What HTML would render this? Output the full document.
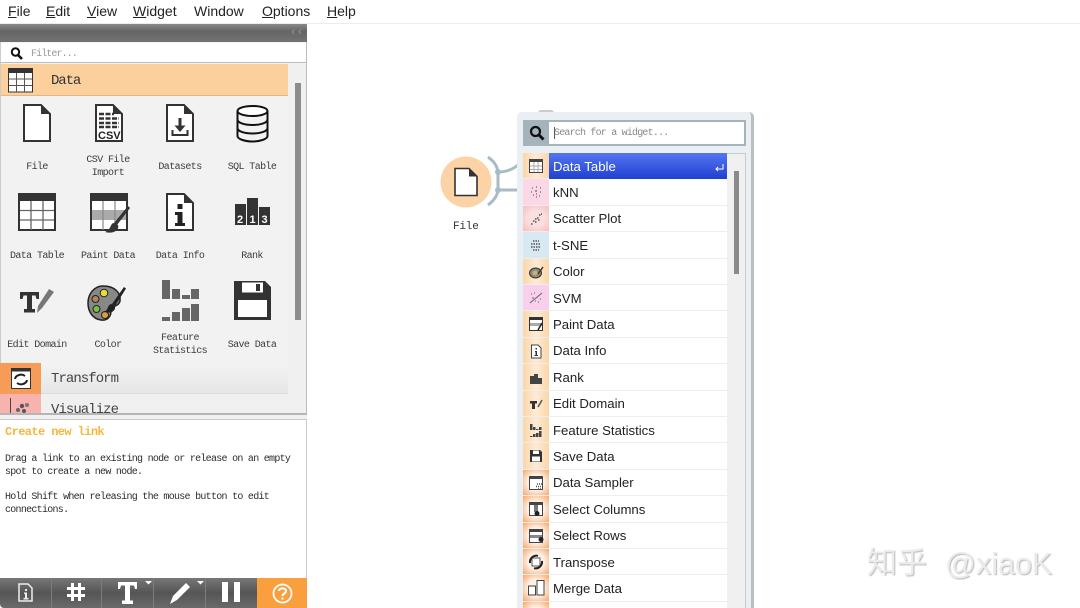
<!DOCTYPE html>
<html><head><meta charset="utf-8"><style>
html,body{margin:0;padding:0;width:1080px;height:608px;overflow:hidden;background:#fff}
#root{position:relative;width:1080px;height:608px;overflow:hidden;background:#fff}
#root div,#root span{position:absolute;box-sizing:border-box}
svg{position:absolute;overflow:visible}
#root .m{font:14px "Liberation Sans",sans-serif;color:#222;top:3px;white-space:nowrap}
.m u{text-decoration:underline}
#root .l{font:10px/13px "Liberation Mono",monospace;letter-spacing:-.6px;color:#3c3c3c;text-align:center;white-space:pre;width:72px}
#root .h{font:10px/13px "Liberation Mono",monospace;letter-spacing:-.72px;color:#2c2c2c;left:5px;white-space:pre}
#root .r{left:523px;width:204px;height:26.4px;background:#fff;border-bottom:1px solid #eee}
.r i{position:absolute;left:0;top:0;width:26px;height:100%;display:block}
.r b{position:absolute;left:30px;top:4.500px;font:normal 13.200px/18px "Liberation Sans",sans-serif;color:#222;white-space:nowrap}
.r svg{left:6px;top:6px}
.o i{background:linear-gradient(90deg,#fcd6a8,#fdebd6 50%,#fcd6a8)}
.d i{background:radial-gradient(#fdf0e4 45%,#f8a566)}
</style></head><body><div id="root">
<span class="m" style="left:8px"><u>F</u>ile</span>
<span class="m" style="left:46px"><u>E</u>dit</span>
<span class="m" style="left:87px"><u>V</u>iew</span>
<span class="m" style="left:133px"><u>W</u>idget</span>
<span class="m" style="left:194px">Window</span>
<span class="m" style="left:262px"><u>O</u>ptions</span>
<span class="m" style="left:327px"><u>H</u>elp</span>
<div style="left:0;top:23px;width:1080px;height:1px;background:#ececec"></div>

<!-- left dock -->
<div style="left:0;top:24px;width:307px;height:18px;background:linear-gradient(#8a8a8a,#656565 40%,#737373)"></div>
<span style="left:290px;top:26px;font:11px/14px 'Liberation Mono',monospace;color:#999">‹‹</span>
<div style="left:0;top:42px;width:307px;height:372px;background:#f2f2f2;border-right:1px solid #bbb;border-left:1px solid #ccc"></div>
<div style="left:1px;top:43px;width:305px;height:20px;background:#fff;border-bottom:1px solid #bbb"></div>
<svg style="left:10px;top:47px" width="14" height="13" viewBox="0 0 14 13"><circle cx="5.5" cy="5" r="3.7" fill="none" stroke="#111" stroke-width="2"/><path d="M8 8l4 4" stroke="#111" stroke-width="2.6"/></svg>
<span style="left:31px;top:48px;font:10px/13px 'Liberation Mono',monospace;letter-spacing:-.9px;color:#999">Filter...</span>
<div style="left:1px;top:64px;width:287px;height:32px;background:#fbd09d;border-bottom:1px solid #e2b785"></div>
<svg style="left:8px;top:68px" width="26" height="25" viewBox="0 0 26 25"><rect x=".5" y=".5" width="24" height="23.5" fill="#fff" stroke="#333"/><rect x="0" y="0" width="25" height="5" fill="#333"/><path d="M1 11h23M1 17.500h23M8.500 5v19M16.500 5v19" stroke="#555"/></svg>
<span style="left:51px;top:73px;font:14px/16px 'Liberation Mono',monospace;letter-spacing:-1.100px;color:#333">Data</span>
<div style="left:288px;top:64px;width:18px;height:350px;background:#f0f0f0"></div>
<div style="left:295px;top:83px;width:6px;height:237px;background:#8c8c8c"></div>

<!-- row1 icons -->
<svg style="left:23px;top:104px" width="28" height="38" viewBox="0 0 28 38"><path d="M1 1H18L27 10V37H1Z" fill="#fff" stroke="#333" stroke-width="2"/><path d="M18 1L27 10H18Z" fill="#333"/></svg>
<svg style="left:95px;top:104px" width="28" height="38" viewBox="0 0 28 38"><path d="M1 1H18L27 10V37H1Z" fill="#fff" stroke="#333" stroke-width="2"/><path d="M18 1L27 10H18Z" fill="#333"/><path d="M4 10h15M4 14.500h20M4 19h20M4 23h20" stroke="#333" stroke-width="2.500" stroke-dasharray="5 1.500"/><text x="3" y="35" font-family="Liberation Sans" font-weight="700" font-size="11" fill="#222">CSV</text></svg>
<svg style="left:166px;top:104px" width="28" height="38" viewBox="0 0 28 38"><path d="M1 1H18L27 10V37H1Z" fill="#fff" stroke="#333" stroke-width="2"/><path d="M18 1L27 10H18Z" fill="#333"/><path d="M14 14v10" stroke="#333" stroke-width="3"/><path d="M8.500 21.500h11L14 28Z" fill="#333"/><path d="M6.500 26v5h15v-5" fill="none" stroke="#333" stroke-width="2"/></svg>
<svg style="left:236px;top:105px" width="33" height="38" viewBox="0 0 33 38"><ellipse cx="16.500" cy="6" rx="15" ry="5" fill="#fff" stroke="#111" stroke-width="2"/><path d="M1.500 6V31C1.500 34 9 36.500 16.500 36.500S31.500 34 31.500 31V6M1.500 14.500C1.500 18 9 20 16.500 20S31.500 18 31.500 14.500M1.500 23C1.500 26.500 9 28.500 16.500 28.500S31.500 26.500 31.500 23" fill="none" stroke="#111" stroke-width="2"/></svg>
<span class="l" style="left:1px;top:161px">File</span>
<span class="l" style="left:72px;top:154px">CSV File
Import</span>
<span class="l" style="left:144px;top:161px">Datasets</span>
<span class="l" style="left:216px;top:161px">SQL Table</span>

<!-- row2 icons -->
<svg style="left:18px;top:193px" width="38" height="38" viewBox="0 0 38 38"><rect x="1" y="1" width="36" height="36" fill="#fff" stroke="#333" stroke-width="2"/><rect width="38" height="8" fill="#333"/><path d="M2 17.500h34M2 27h34M13 8v29M25 8v29" stroke="#666" stroke-width="1.300"/></svg>
<svg style="left:90px;top:193px" width="40" height="42" viewBox="0 0 40 42"><rect x="1" y="1" width="36" height="36" fill="#fff" stroke="#333" stroke-width="2"/><rect width="38" height="8" fill="#333"/><rect x="2" y="17" width="34" height="10" fill="#aaa"/><path d="M13 8v29M25 8v29" stroke="#888" stroke-width="1.200"/><path d="M38 13L40 15L27 32L24 30Z" fill="#333"/><path d="M24 30C20 30 22 36 15 39C22 41 30 38 28 32Z" fill="#333"/></svg>
<svg style="left:166px;top:193px" width="28" height="38" viewBox="0 0 28 38"><path d="M1 1H18L27 10V37H1Z" fill="#fff" stroke="#333" stroke-width="2"/><path d="M18 1L27 10H18Z" fill="#333"/><rect x="11.500" y="11" width="5" height="5" fill="#222"/><path d="M9 19h7.500v11H19v3H9v-3h2.500v-8H9Z" fill="#222"/></svg>
<svg style="left:235px;top:198px" width="35" height="30" viewBox="0 0 35 30"><rect x="0" y="6" width="11" height="8" fill="#333"/><rect x="12" y="0" width="11" height="14" fill="#333"/><rect x="24" y="9" width="11" height="5" fill="#333"/><rect x="0" y="14" width="11" height="13" fill="#333"/><rect x="12" y="14" width="11" height="13" fill="#333"/><rect x="24" y="14" width="11" height="13" fill="#333"/><text x="2" y="25" font-family="Liberation Sans" font-weight="700" font-size="11" fill="#fff">2</text><text x="14.500" y="25" font-family="Liberation Sans" font-weight="700" font-size="11" fill="#fff">1</text><text x="26.500" y="25" font-family="Liberation Sans" font-weight="700" font-size="11" fill="#fff">3</text></svg>
<span class="l" style="left:1px;top:250px">Data Table</span>
<span class="l" style="left:72px;top:250px">Paint Data</span>
<span class="l" style="left:144px;top:250px">Data Info</span>
<span class="l" style="left:216px;top:250px">Rank</span>

<!-- row3 icons -->
<svg style="left:19px;top:288px" width="36" height="28" viewBox="0 0 36 28"><path d="M1 4H20V11H17.500L16.500 7.500H13V21H16V24.500H5V21H8V7.500H4.500L3.500 11H1Z" fill="#333"/><path d="M30 1L35 4L23 20L18 25L19 18Z" fill="#777"/></svg>
<svg style="left:87px;top:285px" width="40" height="37" viewBox="0 0 40 37"><path d="M16 1C28 1 34 8 33 16C32 22 24 20 24 26C24 32 20 36 14 35C6 34 1 27 1 18C1 8 8 1 16 1Z" fill="#888" stroke="#222" stroke-width="1.500"/><circle cx="17" cy="8" r="3.800" fill="#e9dc3a" stroke="#222"/><circle cx="8.500" cy="14" r="3.500" fill="#b5825c" stroke="#222"/><circle cx="9.500" cy="24" r="3.500" fill="#76c044" stroke="#222"/><circle cx="18" cy="30" r="3.500" fill="#d9a13a" stroke="#222"/><path d="M37 2L39 3.500L28 21L25 19Z" fill="#222"/><path d="M25 19C20 19 22 25 17 27C24 29 29 26 28 21Z" fill="#222"/></svg>
<svg style="left:162px;top:280px" width="38" height="42" viewBox="0 0 38 42"><path d="M0 0h8v19H0ZM10 9h8v10h-8ZM20 15h8v4h-8ZM29 9h8v10h-8ZM0 37h8v4H0ZM10 32h8v9h-8ZM20 28h8v13h-8ZM29 24h8v17h-8Z" fill="#666"/></svg>
<svg style="left:234px;top:281px" width="37" height="39" viewBox="0 0 37 39"><path d="M0 0H31L37 6V39H0Z" fill="#333"/><rect x="8" y="1.500" width="21" height="10" fill="#fff"/><rect x="22" y="3" width="4" height="7" fill="#333"/><rect x="4" y="19" width="29" height="17" fill="#fff"/></svg>
<span class="l" style="left:1px;top:339px">Edit Domain</span>
<span class="l" style="left:72px;top:339px">Color</span>
<span class="l" style="left:144px;top:332px">Feature
Statistics</span>
<span class="l" style="left:216px;top:339px">Save Data</span>

<!-- categories -->
<div style="left:41px;top:363px;width:247px;height:31px;background:linear-gradient(#f3f3f3,#e6e6e6);border-bottom:1px solid #ddd"></div>
<div style="left:0;top:363px;width:41px;height:31px;background:#f79b58"></div>
<svg style="left:11px;top:368px" width="20" height="21" viewBox="0 0 20 21"><rect x=".5" y=".5" width="19" height="20" fill="#fff" stroke="#333"/><rect width="20" height="3.500" fill="#333"/><path d="M4 11A6 5 0 0 1 14 8M16 12A6 5 0 0 1 6 15" fill="none" stroke="#222" stroke-width="2"/></svg>
<span style="left:51px;top:371px;font:14px/16px 'Liberation Mono',monospace;letter-spacing:-.95px;color:#444">Transform</span>
<div style="left:41px;top:394px;width:247px;height:19px;background:#f0f0f0"></div>
<div style="left:0;top:394px;width:41px;height:19px;background:#f8b3ae"></div>
<div style="left:10px;top:398px;width:1px;height:15px;background:#444"></div>
<svg style="left:15px;top:402px" width="16" height="11" viewBox="0 0 16 11"><circle cx="3" cy="8" r="2" fill="#666"/><circle cx="7" cy="4" r="2.200" fill="#555"/><circle cx="12" cy="3" r="2" fill="#777"/><circle cx="9" cy="9" r="2" fill="#555"/></svg>
<div style="left:0;top:394px;width:306px;height:19px;overflow:hidden"><span style="left:51px;top:8px;font:14px/16px 'Liberation Mono',monospace;letter-spacing:-.95px;color:#444">Visualize</span></div>
<div style="left:0;top:413px;width:307px;height:7px;background:#f0f0f0;border-top:2px solid #b5b5b5;border-bottom:1px solid #c8c8c8"></div>

<!-- help -->
<div style="left:0;top:420px;width:307px;height:158px;background:#fff;border-right:1px solid #ccc"></div>
<span style="left:5px;top:425px;font:bold 12px/14px 'Liberation Mono',monospace;letter-spacing:-.6px;color:#f6b73c">Create new link</span>
<span class="h" style="top:453px">Drag a link to an existing node or release on an empty
spot to create a new node.</span>
<span class="h" style="top:491px">Hold Shift when releasing the mouse button to edit
connections.</span>

<!-- toolbar -->
<div style="left:0;top:578px;width:257px;height:30px;background:linear-gradient(#777,#555 50%,#6a6a6a);border-radius:0 0 0 4px"></div>
<div style="left:257px;top:578px;width:50px;height:30px;background:#fa9f3e"></div>
<div style="left:51px;top:578px;width:1px;height:30px;background:#7d7d7d"></div>
<div style="left:101px;top:578px;width:1px;height:30px;background:#7d7d7d"></div>
<div style="left:153px;top:578px;width:1px;height:30px;background:#7d7d7d"></div>
<div style="left:205px;top:578px;width:1px;height:30px;background:#7d7d7d"></div>
<svg style="left:18px;top:583px" width="15" height="19" viewBox="0 0 15 19"><path d="M1 1H10L14 5V18H1Z" fill="none" stroke="#eee" stroke-width="1.500"/><path d="M7 6h2v2H7ZM6 9.500h3V15h1.500v1.500h-5V15H7v-4H6Z" fill="#eee"/></svg>
<svg style="left:66px;top:582px" width="20" height="20" viewBox="0 0 20 20"><path d="M6.500 1V19M13.500 1V19M1 6.500H19M1 13.500H19" stroke="#fff" stroke-width="3"/></svg>
<svg style="left:117px;top:581px" width="36" height="24" viewBox="0 0 36 24"><path d="M1 1H20V8H18L17 4.500H13V19.500H16V23H5V19.500H8V4.500H4L3 8H1Z" fill="#fff"/><path d="M28 0h7l-3.500 3.500Z" fill="#fff"/></svg>
<svg style="left:169px;top:581px" width="36" height="24" viewBox="0 0 36 24"><path d="M17 2L21 6L8 19L1 23L4 15Z" fill="#fff"/><path d="M28 0h7l-3.500 3.500Z" fill="#fff"/></svg>
<svg style="left:222px;top:582px" width="19" height="20" viewBox="0 0 19 20"><rect width="6" height="20" fill="#fff"/><rect x="12" width="6" height="20" fill="#fff"/></svg>
<svg style="left:272px;top:583px" width="21" height="21" viewBox="0 0 21 21"><circle cx="10.500" cy="10.500" r="9" fill="none" stroke="#fff" stroke-width="1.800"/><path d="M7 8C7 4.500 14 4.500 14 8C14 10.500 10.500 10.500 10.500 13" fill="none" stroke="#fff" stroke-width="2"/><rect x="9.500" y="14.500" width="2" height="2" fill="#fff"/></svg>

<!-- canvas node -->
<svg style="left:430px;top:100px" width="100" height="130" viewBox="0 0 100 130">
<circle cx="36" cy="82" r="25.500" fill="#fcd3a6"/>
<path d="M58 57C66 63 68 68 68 75V87C68 94 66 99 58 105M68 72C76 72 82 70 88 65M68 90H88" fill="none" stroke="#a9bcc6" stroke-width="3"/>
<circle cx="68" cy="72" r="3" fill="#a9bcc6"/><circle cx="68" cy="90" r="3" fill="#a9bcc6"/>
<path d="M25 68.500H39L47 76.500V95.500H25Z" fill="#fff" stroke="#333" stroke-width="1.600"/><path d="M39 68.500L47 76.500H39Z" fill="#333"/>
</svg>
<span style="left:453px;top:220px;font:11px/14px 'Liberation Mono',monospace;color:#333;letter-spacing:-.2px">File</span>

<!-- popup -->
<div style="left:538px;top:110px;width:16px;height:4px;background:#ccc;border-radius:3px 3px 0 0"></div>
<div style="left:517px;top:112px;width:237px;height:500px;background:#e9eff2;border-radius:5px;border-right:3px solid #b8bfc3"></div>
<div style="left:523px;top:120px;width:26px;height:26px;background:#a5b3bb"></div>
<svg style="left:529px;top:125px" width="16" height="16" viewBox="0 0 16 16"><circle cx="6.500" cy="6.500" r="4.500" fill="none" stroke="#111" stroke-width="2.200"/><path d="M10 10l4.500 4.500" stroke="#111" stroke-width="3"/></svg>
<div style="left:549px;top:120px;width:197px;height:26px;background:#fff;border:2px solid #a5b3bb;border-left:0"></div>
<div style="left:554px;top:127px;width:1px;height:12px;background:#555"></div>
<span style="left:554px;top:127px;font:10px/13px 'Liberation Mono',monospace;color:#888;letter-spacing:-.8px">Search for a widget...</span>
<div style="left:523px;top:153px;width:223px;height:460px;background:#f0f0f0;border:1px solid #c9c9c9"></div>
<div style="left:734px;top:171px;width:5px;height:103px;background:#8a8a8a"></div>

<div class="r o" style="top:153px"><i></i><svg width="14" height="14" viewBox="0 0 14 14"><rect x=".5" y=".5" width="13" height="13" fill="#fff" stroke="#444"/><rect width="14" height="3" fill="#444"/><path d="M1 7h12M1 10.500h12M5 3v10M9 3v10" stroke="#999" stroke-width=".8"/></svg></div>
<div style="left:549px;top:153px;width:178px;height:26px;background:linear-gradient(#5576f2,#1f3fd0)"></div>
<span style="left:553px;top:157.500px;font:13.200px/18px 'Liberation Sans',sans-serif;color:#fff">Data Table</span>
<svg style="left:715px;top:163px" width="10" height="9" viewBox="0 0 10 9"><path d="M8 1V6H1M3 4L1 6L3 8" fill="none" stroke="#fff"/></svg>

<div class="r" style="top:179.400px"><i style="background:#fcd8e6"></i><svg width="14" height="14" viewBox="0 0 14 14"><path d="M3 3h1M7 2h1M11 3h1M2 7h1M6 6h2M11 7h1M4 10h1M7 9h1M10 11h1M7 12h1" stroke="#666" stroke-width="1.200"/></svg><b>kNN</b></div>
<div class="r" style="top:205.800px"><i style="background:radial-gradient(#fbdede 45%,#f9bcbc)"></i><svg width="14" height="14" viewBox="0 0 14 14"><path d="M2 12h1.500M4 9h1.500M6 10h1.500M6 7h1.500M8 6h1.500M10 3h1.500M9 8h1.500M12 2h1" stroke="#555" stroke-width="1.500"/></svg><b>Scatter Plot</b></div>
<div class="r" style="top:232.200px"><i style="background:#d9e9f4"></i><svg width="14" height="14" viewBox="0 0 14 14"><path d="M4 3h6M2 6h10M2 9h10M4 12h6" stroke="#555" stroke-width="1.500" stroke-dasharray="1.500 1"/></svg><b>t-SNE</b></div>
<div class="r o" style="top:258.600px"><i></i><svg width="15" height="14" viewBox="0 0 15 14"><ellipse cx="6.500" cy="8" rx="6" ry="5" fill="#8a8a78" stroke="#333"/><circle cx="6" cy="8" r="2.500" fill="#c8b070"/><path d="M14 2L9 9" stroke="#333" stroke-width="1.500"/></svg><b>Color</b></div>
<div class="r" style="top:285px"><i style="background:#f9cfec"></i><svg width="14" height="14" viewBox="0 0 14 14"><path d="M1 12L13 2M2 3h1M5 2h1M9 5h1M3 7h2M11 8h1M6 10h1M9 11h1" stroke="#666" stroke-width="1"/></svg><b>SVM</b></div>
<div class="r o" style="top:311.400px"><i></i><svg width="15" height="15" viewBox="0 0 15 15"><rect x=".5" y=".5" width="13" height="13" fill="#fff" stroke="#333"/><rect width="14" height="3" fill="#333"/><rect x="1" y="6" width="12" height="3" fill="#aaa"/><path d="M13 6L9 13" stroke="#222" stroke-width="1.500"/></svg><b>Paint Data</b></div>
<div class="r o" style="top:337.800px"><i></i><svg width="14" height="15" viewBox="0 0 14 15"><path d="M2.500 1H9L12 4V14H2.500Z" fill="#fff" stroke="#444"/><path d="M6.500 4h1.500v1.500H6.500ZM6 7h2v4h1v1H5.500v-1h1V8H6Z" fill="#333"/></svg><b>Data Info</b></div>
<div class="r o" style="top:364.200px"><i></i><svg width="14" height="14" viewBox="0 0 14 14" style="top:8px"><path d="M1 4h4v8H1ZM5 2h4v10H5ZM9 6h4v6H9Z" fill="#444"/></svg><b>Rank</b></div>
<div class="r o" style="top:390.600px"><i></i><svg width="14" height="14" viewBox="0 0 14 14" style="top:8px"><path d="M1 2H8V4.500H6V10H3V4.500H1Z" fill="#333"/><path d="M13 1L9 8" stroke="#555" stroke-width="1.500"/></svg><b>Edit Domain</b></div>
<div class="r o" style="top:417px"><i></i><svg width="14" height="15" viewBox="0 0 14 15"><path d="M1 1h2.500v6H1ZM4 4h2.500v3H4ZM7 6h2.500v1H7ZM10 4h2.500v3H10ZM1 13h2.500v1H1ZM4 11h2.500v3H4ZM7 10h2.500v4H7ZM10 8h2.500v6H10Z" fill="#444"/></svg><b>Feature Statistics</b></div>
<div class="r o" style="top:443.400px"><i></i><svg width="14" height="14" viewBox="0 0 14 14"><path d="M1 1H11L13 3V13H1Z" fill="#333"/><rect x="4" y="1.500" width="6" height="3.500" fill="#fff"/><rect x="3" y="7.500" width="8" height="5" fill="#fff"/></svg><b>Save Data</b></div>
<div class="r d" style="top:469.800px"><i></i><svg width="15" height="15" viewBox="0 0 15 15"><rect x=".5" y=".5" width="13" height="13" fill="#fff" stroke="#444"/><rect width="14" height="3" fill="#444"/><path d="M8 8h5M7 10.500h6M9 13h4" stroke="#555" stroke-width="1.500" stroke-dasharray="1 1"/></svg><b>Data Sampler</b></div>
<div class="r d" style="top:496.200px"><i></i><svg width="15" height="15" viewBox="0 0 15 15"><rect x=".5" y=".5" width="13" height="13" fill="#fff" stroke="#444"/><rect width="14" height="3" fill="#444"/><rect x="5" y="3" width="4" height="7" fill="#777"/><circle cx="8" cy="11.500" r="2.500" fill="#222"/></svg><b>Select Columns</b></div>
<div class="r d" style="top:522.600px"><i></i><svg width="15" height="15" viewBox="0 0 15 15"><rect x=".5" y=".5" width="13" height="13" fill="#fff" stroke="#444"/><rect width="14" height="3" fill="#444"/><rect x="1" y="6" width="12" height="3" fill="#888"/><circle cx="12" cy="10.500" r="2.500" fill="#222"/></svg><b>Select Rows</b></div>
<div class="r d" style="top:549px"><i></i><svg width="16" height="16" viewBox="0 0 16 16" style="left:5px;top:5px"><rect x="4" y="4" width="8" height="8" fill="#fff" stroke="#555"/><path d="M2 9A6.500 6.500 0 0 1 10 1.800M14 7A6.500 6.500 0 0 1 6 14.200" fill="none" stroke="#222" stroke-width="2"/></svg><b>Transpose</b></div>
<div class="r d" style="top:575.400px"><i></i><svg width="17" height="16" viewBox="0 0 17 16" style="left:5px;top:5px"><rect x=".5" y="6" width="7" height="9" fill="#fff" stroke="#444"/><rect x="9" y=".5" width="7" height="14.500" fill="#fff" stroke="#444"/></svg><b>Merge Data</b></div>
<div class="r d" style="top:601.800px"><i></i></div>

<!-- watermark -->
<span style="left:867px;top:547px;font:30px/34px 'Liberation Sans','Noto Sans CJK SC',sans-serif;color:#ebebeb;text-shadow:1px 1px 1px #bbb;white-space:nowrap">知乎</span>
<span style="left:945px;top:547px;font:30.500px/34px 'Liberation Sans',sans-serif;color:#ebebeb;text-shadow:1px 1px 1px #bbb;white-space:nowrap">@xiaoK</span>
</div></body></html>
